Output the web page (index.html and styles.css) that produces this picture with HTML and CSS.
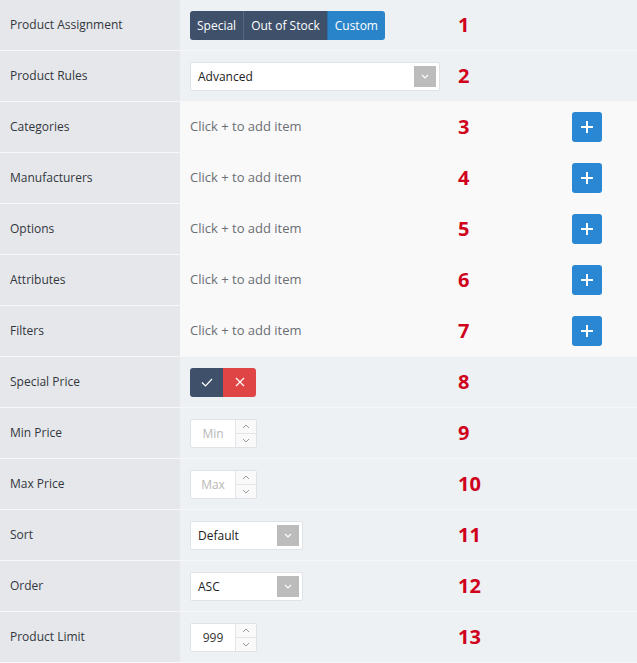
FILE: index.html
```html
<!DOCTYPE html>
<html>
<head>
    <meta charset="utf-8">
    <link rel="stylesheet" href="styles.css">
</head>
<body>
    <div class="form">
        <div class="row">
            <div class="label">Product Assignment</div>
            <div class="field">
                <div class="control">
                    <div class="segments">
                        <span class="seg">Special</span>
                        <span class="seg">Out of Stock</span>
                        <span class="seg seg-active">Custom</span>
                    </div>
                </div>
                <div class="num">1</div>
            </div>
        </div>

        <div class="row">
            <div class="label">Product Rules</div>
            <div class="field">
                <div class="control">
                    <div class="select select-wide">
                        <span>Advanced</span>
                        <span class="select-arrow"><svg width="8" height="5" viewBox="0 0 8 5"><path d="M1 1l3 3 3-3" fill="none" stroke="#fff" stroke-width="1.2"/></svg></span>
                    </div>
                </div>
                <div class="num">2</div>
            </div>
        </div>

        <div class="row row-light">
            <div class="label">Categories</div>
            <div class="field">
                <div class="control placeholder">Click + to add item</div>
                <div class="num">3</div>
                <span class="add-btn"><svg width="12" height="12" viewBox="0 0 12 12"><path d="M6 0v12M0 6h12" stroke="#fff" stroke-width="2"/></svg></span>
            </div>
        </div>

        <div class="row row-light">
            <div class="label">Manufacturers</div>
            <div class="field">
                <div class="control placeholder">Click + to add item</div>
                <div class="num">4</div>
                <span class="add-btn"><svg width="12" height="12" viewBox="0 0 12 12"><path d="M6 0v12M0 6h12" stroke="#fff" stroke-width="2"/></svg></span>
            </div>
        </div>

        <div class="row row-light">
            <div class="label">Options</div>
            <div class="field">
                <div class="control placeholder">Click + to add item</div>
                <div class="num">5</div>
                <span class="add-btn"><svg width="12" height="12" viewBox="0 0 12 12"><path d="M6 0v12M0 6h12" stroke="#fff" stroke-width="2"/></svg></span>
            </div>
        </div>

        <div class="row row-light">
            <div class="label">Attributes</div>
            <div class="field">
                <div class="control placeholder">Click + to add item</div>
                <div class="num">6</div>
                <span class="add-btn"><svg width="12" height="12" viewBox="0 0 12 12"><path d="M6 0v12M0 6h12" stroke="#fff" stroke-width="2"/></svg></span>
            </div>
        </div>

        <div class="row row-light">
            <div class="label">Filters</div>
            <div class="field">
                <div class="control placeholder">Click + to add item</div>
                <div class="num">7</div>
                <span class="add-btn"><svg width="12" height="12" viewBox="0 0 12 12"><path d="M6 0v12M0 6h12" stroke="#fff" stroke-width="2"/></svg></span>
            </div>
        </div>

        <div class="row">
            <div class="label">Special Price</div>
            <div class="field">
                <div class="control">
                    <div class="toggle">
                        <span class="toggle-on"><svg width="12" height="9" viewBox="0 0 12 9"><path d="M1 4.5l3.5 3.5 6.5-7" fill="none" stroke="#fff" stroke-width="1.2"/></svg></span>
                        <span class="toggle-off"><svg width="10" height="10" viewBox="0 0 10 10"><path d="M1 1l8 8M9 1l-8 8" stroke="#fff" stroke-width="1.2"/></svg></span>
                    </div>
                </div>
                <div class="num">8</div>
            </div>
        </div>

        <div class="row">
            <div class="label">Min Price</div>
            <div class="field">
                <div class="control">
                    <div class="spinner">
                        <span class="spinner-value spinner-empty">Min</span>
                        <span class="spinner-btns">
                            <span><svg width="8" height="5" viewBox="0 0 8 5"><path d="M1 4l3-3 3 3" fill="none" stroke="#999" stroke-width="1"/></svg></span>
                            <span><svg width="8" height="5" viewBox="0 0 8 5"><path d="M1 1l3 3 3-3" fill="none" stroke="#999" stroke-width="1"/></svg></span>
                        </span>
                    </div>
                </div>
                <div class="num">9</div>
            </div>
        </div>

        <div class="row">
            <div class="label">Max Price</div>
            <div class="field">
                <div class="control">
                    <div class="spinner">
                        <span class="spinner-value spinner-empty">Max</span>
                        <span class="spinner-btns">
                            <span><svg width="8" height="5" viewBox="0 0 8 5"><path d="M1 4l3-3 3 3" fill="none" stroke="#999" stroke-width="1"/></svg></span>
                            <span><svg width="8" height="5" viewBox="0 0 8 5"><path d="M1 1l3 3 3-3" fill="none" stroke="#999" stroke-width="1"/></svg></span>
                        </span>
                    </div>
                </div>
                <div class="num">10</div>
            </div>
        </div>

        <div class="row">
            <div class="label">Sort</div>
            <div class="field">
                <div class="control">
                    <div class="select select-small">
                        <span>Default</span>
                        <span class="select-arrow"><svg width="8" height="5" viewBox="0 0 8 5"><path d="M1 1l3 3 3-3" fill="none" stroke="#fff" stroke-width="1.2"/></svg></span>
                    </div>
                </div>
                <div class="num">11</div>
            </div>
        </div>

        <div class="row">
            <div class="label">Order</div>
            <div class="field">
                <div class="control">
                    <div class="select select-small">
                        <span>ASC</span>
                        <span class="select-arrow"><svg width="8" height="5" viewBox="0 0 8 5"><path d="M1 1l3 3 3-3" fill="none" stroke="#fff" stroke-width="1.2"/></svg></span>
                    </div>
                </div>
                <div class="num">12</div>
            </div>
        </div>

        <div class="row">
            <div class="label">Product Limit</div>
            <div class="field">
                <div class="control">
                    <div class="spinner">
                        <span class="spinner-value">999</span>
                        <span class="spinner-btns">
                            <span><svg width="8" height="5" viewBox="0 0 8 5"><path d="M1 4l3-3 3 3" fill="none" stroke="#999" stroke-width="1"/></svg></span>
                            <span><svg width="8" height="5" viewBox="0 0 8 5"><path d="M1 1l3 3 3-3" fill="none" stroke="#999" stroke-width="1"/></svg></span>
                        </span>
                    </div>
                </div>
                <div class="num">13</div>
            </div>
        </div>
    </div>
</body>
</html>
```

FILE: styles.css
```css
body {
    margin: 0;
    font-family: 'Open Sans', 'Liberation Sans', sans-serif;
    font-size: 12px;
    color: #333;
    background: #eef1f4;
}

.form {
    width: 637px;
}

.row {
    display: grid;
    grid-template-columns: 180px 1fr;
    height: 50px;
    border-bottom: 1px solid #f6f7f9;
}

.label {
    display: flex;
    align-items: center;
    padding: 0 0 2px 10px;
    background: #e5e7eb;
    color: #33373d;
    font-size: 12px;
}

.field {
    display: flex;
    align-items: center;
    padding-left: 10px;
    background: #eef1f4;
}

.row-light .field {
    background: #f9f9fa;
}

.control {
    width: 268px;
    display: flex;
    align-items: center;
}

.placeholder {
    color: #6b6e73;
    font-size: 13px;
    padding-bottom: 2px;
}

.num {
    width: 114px;
    color: #d0021b;
    font-size: 20px;
    font-weight: bold;
    padding-bottom: 2px;
}

/* segmented buttons */
.segments {
    display: flex;
    height: 29px;
    border-radius: 3px;
    overflow: hidden;
}

.seg {
    display: flex;
    align-items: center;
    padding: 0 7px;
    background: #3e506a;
    color: #fff;
    font-size: 12px;
    border-left: 1px solid #566883;
}

.seg:first-child {
    border-left: none;
}

.seg-active {
    background: #2a84c9;
    border-left-color: #2a6fa8;
}

/* select */
.select {
    display: flex;
    align-items: center;
    justify-content: space-between;
    height: 29px;
    box-sizing: border-box;
    padding: 0 3px 0 7px;
    background: #fff;
    border: 1px solid #dfe2e6;
    border-radius: 2px;
    font-size: 12px;
    color: #222;
}

.select-wide {
    width: 250px;
}

.select-small {
    width: 113px;
}

.select-arrow {
    display: flex;
    align-items: center;
    justify-content: center;
    width: 22px;
    height: 21px;
    background: #bcbcbc;
}

/* add button */
.add-btn {
    display: flex;
    align-items: center;
    justify-content: center;
    width: 30px;
    height: 30px;
    background: #2a87d3;
    border-radius: 3px;
}

/* toggle */
.toggle {
    display: flex;
    height: 29px;
    border-radius: 3px;
    overflow: hidden;
}

.toggle-on,
.toggle-off {
    display: flex;
    align-items: center;
    justify-content: center;
    width: 33px;
}

.toggle-on {
    background: #3e506a;
}

.toggle-off {
    background: #e04545;
}

/* number spinner */
.spinner {
    display: flex;
    width: 67px;
    height: 29px;
    box-sizing: border-box;
    background: #fff;
    border: 1px solid #dfe2e6;
    border-radius: 2px;
}

.spinner-value {
    width: 44px;
    display: flex;
    align-items: center;
    justify-content: center;
    font-size: 12px;
    color: #333;
}

.spinner-empty {
    color: #b8b8b8;
}

.spinner-btns {
    flex: 1;
    display: flex;
    flex-direction: column;
    border-left: 1px solid #e3e5e8;
    background: #f9f9fa;
}

.spinner-btns span {
    flex: 1;
    display: flex;
    align-items: center;
    justify-content: center;
}

.spinner-btns span:first-child {
    border-bottom: 1px solid #e3e5e8;
}
```
